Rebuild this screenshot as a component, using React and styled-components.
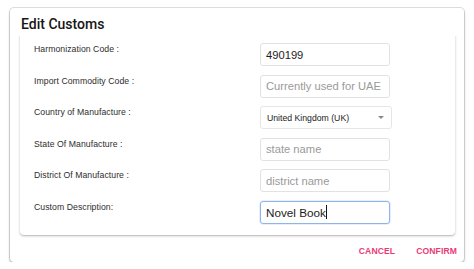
import React from "react";
import styled, { createGlobalStyle } from "styled-components";

const Global = createGlobalStyle`
  html, body { margin: 0; padding: 0; background: #fff; }
  body { font-family: "Liberation Sans", Arial, sans-serif; color: #222; }
`;

const Page = styled.div`
  padding: 8px 10px 0 10px;
`;

const Dialog = styled.div`
  width: 454px;
  height: 254px;
  box-sizing: border-box;
  border-radius: 4px;
  background: #fff;
  box-shadow: 0 0 0 1px rgba(0, 0, 0, 0.13), 0 2px 3px rgba(0, 0, 0, 0.25);
  display: flex;
  flex-direction: column;
  overflow: hidden;
`;

const Title = styled.h2`
  margin: 0;
  height: 28px;
  box-sizing: border-box;
  padding: 8px 11px 0;
  font-family: Roboto, "Liberation Sans", Arial, sans-serif;
  font-weight: 500;
  font-size: 14px;
  line-height: 16px;
  color: #161616;
`;

const Body = styled.div`
  height: 203px;
  overflow: hidden;
  padding: 0 9px 0 10px;
  box-sizing: border-box;
`;

const Card = styled.div`
  margin-top: -4px;
  height: 203px;
  box-sizing: border-box;
  border-radius: 4px;
  background: #fff;
  box-shadow: 0 1px 3px rgba(0, 0, 0, 0.2), 0 1px 1px rgba(0, 0, 0, 0.12);
  padding: 11px 0 0 14px;
`;

const Form = styled.div`
  display: grid;
  grid-template-columns: 226px 136px;
  grid-auto-rows: 23px;
  row-gap: 8.6px;
`;

const Label = styled.label`
  font-size: 8.7px;
  line-height: 10px;
  padding-top: 1px;
  color: #2e2e2e;
  letter-spacing: 0.05px;
`;

const Input = styled.input`
  width: 130px;
  height: 23px;
  box-sizing: border-box;
  border: 1px solid #e2e2e2;
  border-radius: 3px;
  padding: 0 1px 0 5px;
  font-family: "Liberation Sans", Arial, sans-serif;
  font-size: 11.2px;
  color: #1c1c1c;
  outline: none;
  &::placeholder { color: #9a9a9a; }
`;

const Focused = styled.div`
  width: 130px;
  height: 23px;
  box-sizing: border-box;
  border: 1px solid #8fb4e6;
  border-radius: 3px;
  padding: 0 5px;
  display: flex;
  align-items: center;
  font-size: 11.7px;
  color: #1c1c1c;
  box-shadow: 0 0 0 0.5px rgba(120, 160, 230, 0.35);
`;

const Caret = styled.span`
  display: inline-block;
  width: 1px;
  height: 14px;
  background: #111;
  margin-left: 0.5px;
`;

const Select = styled.div`
  width: 132px;
  height: 23px;
  box-sizing: border-box;
  border: 1px solid #e6e6e6;
  border-radius: 3px;
  padding: 0 6px 0 6px;
  display: flex;
  align-items: center;
  justify-content: space-between;
  font-size: 8.7px;
  color: #222;
`;

const Arrow = styled.span`
  width: 0;
  height: 0;
  border-left: 3px solid transparent;
  border-right: 3px solid transparent;
  border-top: 3px solid #8a8a8a;
  margin-right: 1px;
`;

const Footer = styled.div`
  flex: 1;
  display: flex;
  justify-content: flex-end;
  align-items: center;
  gap: 9px;
  padding: 1px 1px 0 0;
`;

const Button = styled.button`
  background: none;
  border: none;
  padding: 4px 6px;
  font-family: "Liberation Sans", Arial, sans-serif;
  font-weight: 700;
  font-size: 8.6px;
  color: #ea3a76;
  letter-spacing: 0.1px;
  cursor: pointer;
`;

const fields = [
  { label: "Harmonization Code :", value: "490199" },
  { label: "Import Commodity Code :", placeholder: "Currently used for UAE" },
  { label: "Country of Manufacture :", select: "United Kingdom (UK)" },
  { label: "State Of Manufacture :", placeholder: "state name" },
  { label: "District Of Manufacture :", placeholder: "district name" },
  { label: "Custom Description:", focused: "Novel Book" },
];

export default function App() {
  return (
    <>
      <Global />
      <Page>
        <Dialog>
          <Title>Edit Customs</Title>
          <Body>
            <Card>
              <Form>
                {fields.map((f) => (
                  <React.Fragment key={f.label}>
                    <Label>{f.label}</Label>
                    {f.select ? (
                      <Select>
                        <span>{f.select}</span>
                        <Arrow />
                      </Select>
                    ) : f.focused ? (
                      <Focused>
                        {f.focused}
                        <Caret />
                      </Focused>
                    ) : (
                      <Input
                        defaultValue={f.value}
                        placeholder={f.placeholder}
                      />
                    )}
                  </React.Fragment>
                ))}
              </Form>
            </Card>
          </Body>
          <Footer>
            <Button>CANCEL</Button>
            <Button>CONFIRM</Button>
          </Footer>
        </Dialog>
      </Page>
    </>
  );
}
